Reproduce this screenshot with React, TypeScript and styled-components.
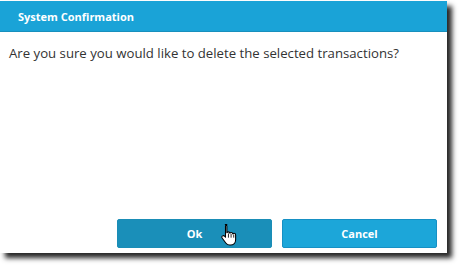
import React from "react";
import styled, { createGlobalStyle } from "styled-components";

const GlobalStyle = createGlobalStyle`
  html, body {
    margin: 0;
    padding: 0;
    background: #ffffff;
  }
  body {
    width: 461px;
    height: 265px;
    overflow: hidden;
    font-family: "Open Sans", "Liberation Sans", sans-serif;
  }
`;

const Page = styled.div`
  width: 461px;
  height: 265px;
  padding: 1px 0 0 0;
  box-sizing: border-box;
`;

const Dialog = styled.div`
  width: 447px;
  height: 252px;
  background: #ffffff;
  display: flex;
  flex-direction: column;
  box-shadow: 5px 5px 5px rgba(0, 0, 0, 0.85);
`;

const Header = styled.header`
  height: 31px;
  background: #1aa3d7;
  color: #ffffff;
  font-size: 11px;
  font-weight: 700;
  display: flex;
  align-items: center;
  padding-left: 18px;
  border-bottom: 1px solid #1890bd;
  box-sizing: border-box;
`;

const Body = styled.div`
  flex: 1;
  padding: 12px 9px 0;
  font-size: 13.2px;
  color: #333333;
`;

const Footer = styled.div`
  display: flex;
  justify-content: flex-end;
  gap: 10px;
  padding: 0 10px 5px;
`;

const Button = styled.button<{ $hover?: boolean }>`
  position: relative;
  width: 155px;
  height: 29px;
  border-radius: 2px;
  border: 1px solid ${(p) => (p.$hover ? "#1a8db6" : "#1690c4")};
  background: ${(p) => (p.$hover ? "#1a8fb9" : "#1ca6d9")};
  color: #ffffff;
  font-family: inherit;
  font-size: 11px;
  font-weight: 700;
  cursor: pointer;
`;

const Cursor = styled.svg`
  position: absolute;
  left: 102px;
  top: 2px;
  width: 19px;
  height: 25px;
`;

function HandCursor() {
  return (
    <Cursor viewBox="0 0 18 22">
      <path
        d="M5 1.5c.9 0 1.5.6 1.5 1.5v6.3c.3-.5.8-.8 1.4-.8.8 0 1.3.5 1.4 1.2.3-.4.8-.6 1.3-.6.8 0 1.4.6 1.5 1.3.3-.3.7-.5 1.2-.5.9 0 1.5.7 1.5 1.6v4.5c0 2.8-2 5-4.8 5H9.3c-1.6 0-2.9-.8-3.8-2L2 14.3c-.5-.7-.3-1.6.4-2 .6-.4 1.4-.2 1.900.3l.9 1V3c0-.9.6-1.5 1.3-1.5z"
        fill="#ffffff"
        stroke="#000000"
        strokeWidth="1"
        strokeLinejoin="round"
      />
      <path d="M8 10v4M10.5 10.5v3.5M13 11v3" stroke="#000" strokeWidth="0.8" />
    </Cursor>
  );
}

export default function App() {
  return (
    <>
      <GlobalStyle />
      <Page>
        <Dialog>
          <Header>System Confirmation</Header>
          <Body>Are you sure you would like to delete the selected transactions?</Body>
          <Footer>
            <Button $hover>
              Ok
              <HandCursor />
            </Button>
            <Button>Cancel</Button>
          </Footer>
        </Dialog>
      </Page>
    </>
  );
}
